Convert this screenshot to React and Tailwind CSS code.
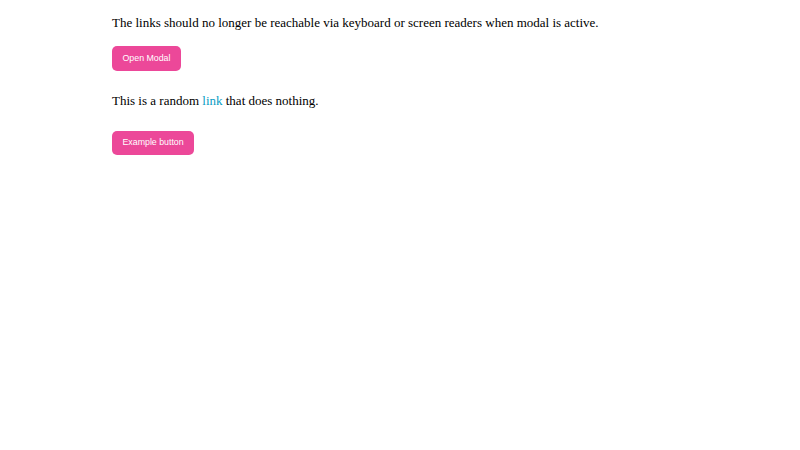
import React from 'react';

function PinkButton({ children }) {
  return (
    <button
      type="button"
      className="h-[24.5px] rounded-[5px] bg-[#ec4899] px-[10.5px] font-['Liberation_Sans',Arial,sans-serif] text-[8.8px] leading-none text-white"
    >
      {children}
    </button>
  );
}

export default function App() {
  return (
    <div className="min-h-[450px] bg-white pl-[112px] pt-[15px] font-['Liberation_Serif','Times_New_Roman',serif] text-[13px] text-black">
      <p className="leading-[15px]">
        The links should no longer be reachable via keyboard or screen readers when modal is active.
      </p>
      <div className="mt-[16px] flex">
        <PinkButton>Open Modal</PinkButton>
      </div>
      <p className="mt-[22px] leading-[15px]">
        This is a random{' '}
        <a href="#" className="text-[#0a9cc4]">
          link
        </a>{' '}
        that does nothing.
      </p>
      <div className="mt-[23px] flex">
        <PinkButton>Example button</PinkButton>
      </div>
    </div>
  );
}
